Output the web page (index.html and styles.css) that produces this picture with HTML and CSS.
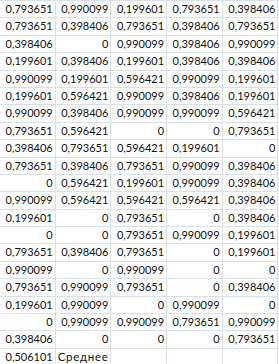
FILE: index.html
```html
<!DOCTYPE html>
<html lang="ru">
<head>
<meta charset="utf-8">
<title>Sheet</title>
<link rel="stylesheet" href="styles.css">
</head>
<body>
<div class="sheet">
<div class="c n">0,793651</div><div class="c n">0,990099</div><div class="c n">0,199601</div><div class="c n">0,793651</div><div class="c n">0,398406</div>
<div class="c n">0,793651</div><div class="c n">0,398406</div><div class="c n">0,793651</div><div class="c n">0,398406</div><div class="c n">0,793651</div>
<div class="c n">0,398406</div><div class="c n">0</div><div class="c n">0,990099</div><div class="c n">0,398406</div><div class="c n">0,990099</div>
<div class="c n">0,199601</div><div class="c n">0,398406</div><div class="c n">0,199601</div><div class="c n">0,398406</div><div class="c n">0,398406</div>
<div class="c n">0,990099</div><div class="c n">0,199601</div><div class="c n">0,596421</div><div class="c n">0,990099</div><div class="c n">0,199601</div>
<div class="c n">0,199601</div><div class="c n">0,596421</div><div class="c n">0,990099</div><div class="c n">0,398406</div><div class="c n">0,199601</div>
<div class="c n">0,990099</div><div class="c n">0,398406</div><div class="c n">0,990099</div><div class="c n">0,990099</div><div class="c n">0,596421</div>
<div class="c n">0,793651</div><div class="c n">0,596421</div><div class="c n">0</div><div class="c n">0</div><div class="c n">0,793651</div>
<div class="c n">0,398406</div><div class="c n">0,793651</div><div class="c n">0,596421</div><div class="c n">0,199601</div><div class="c n">0</div>
<div class="c n">0,793651</div><div class="c n">0,398406</div><div class="c n">0,793651</div><div class="c n">0,990099</div><div class="c n">0,398406</div>
<div class="c n">0</div><div class="c n">0,596421</div><div class="c n">0,199601</div><div class="c n">0,990099</div><div class="c n">0,398406</div>
<div class="c n">0,990099</div><div class="c n">0,596421</div><div class="c n">0,596421</div><div class="c n">0,596421</div><div class="c n">0,398406</div>
<div class="c n">0,199601</div><div class="c n">0</div><div class="c n">0,793651</div><div class="c n">0</div><div class="c n">0,398406</div>
<div class="c n">0</div><div class="c n">0</div><div class="c n">0,793651</div><div class="c n">0,990099</div><div class="c n">0,199601</div>
<div class="c n">0,793651</div><div class="c n">0,398406</div><div class="c n">0,793651</div><div class="c n">0</div><div class="c n">0,199601</div>
<div class="c n">0,990099</div><div class="c n">0</div><div class="c n">0,990099</div><div class="c n">0</div><div class="c n">0</div>
<div class="c n">0,793651</div><div class="c n">0,990099</div><div class="c n">0,793651</div><div class="c n">0</div><div class="c n">0,398406</div>
<div class="c n">0,199601</div><div class="c n">0,990099</div><div class="c n">0</div><div class="c n">0,990099</div><div class="c n">0</div>
<div class="c n">0</div><div class="c n">0,990099</div><div class="c n">0,990099</div><div class="c n">0,793651</div><div class="c n">0,990099</div>
<div class="c n">0,398406</div><div class="c n">0</div><div class="c n">0</div><div class="c n">0</div><div class="c n">0,793651</div>
<div class="c n">0,506101</div><div class="c t">Среднее</div><div class="c"></div><div class="c"></div><div class="c"></div>
</div>
</body>
</html>
```
FILE: styles.css
```css
html, body {
  margin: 0;
  padding: 0;
  background: #ffffff;
}
body {
  width: 279px;
  height: 364px;
  overflow: hidden;
}
.sheet {
  display: grid;
  grid-template-columns: repeat(5, 55.7px);
  grid-auto-rows: 17.4px;
  border-left: 1px solid #d9e0ea;
  border-top: 1px solid #d9e0ea;
  width: max-content;
  margin-left: -1px;
  font-family: Lato, "Open Sans", sans-serif;
  font-size: 11px;
  line-height: 12px;
  color: #111111;
}
.c {
  box-sizing: border-box;
  border-right: 1px solid #d9e0ea;
  border-bottom: 1px solid #d9e0ea;
  padding: 2px 2px 0 2px;
  white-space: nowrap;
  overflow: hidden;
}
.n {
  text-align: right;
}
.t {
  text-align: left;
  font-size: 11.5px;
  letter-spacing: 0.7px;
}
```
